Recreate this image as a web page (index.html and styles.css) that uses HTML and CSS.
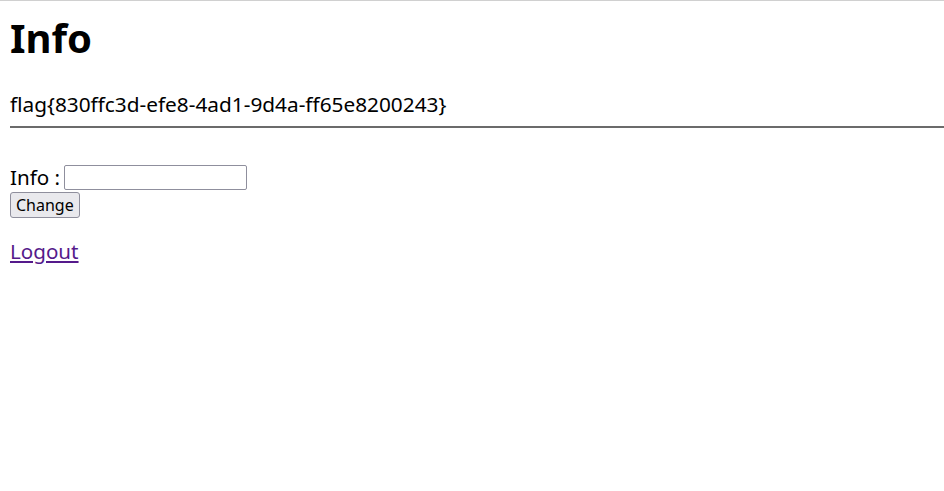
FILE: index.html
```html
<!DOCTYPE html>
<html>
<head>
<meta charset="utf-8">
<link rel="stylesheet" href="styles.css">
</head>
<body>
<div class="topline"></div>
<main class="page">
  <h1 class="title">Info</h1>
  <p class="flag">flag{830ffc3d-efe8-4ad1-9d4a-ff65e8200243}</p>
  <hr class="rule">
  <form class="form">
    <label class="label">Info : <input class="field" type="text"></label>
    <button class="btn" type="button">Change</button>
  </form>
  <a class="logout" href="#">Logout</a>
</main>
</body>
</html>
```
FILE: styles.css
```css
html, body { margin: 0; padding: 0; background: #fff; }
body { font-family: "Noto Sans", "Open Sans", sans-serif; color: #000; }
.topline { height: 1px; background: #d0d0d0; }
.page { padding: 0 0 0 10px; }
.title { font-size: 40px; font-weight: bold; margin: 12px 0 0; line-height: 50px; }
.flag { font-size: 20.8px; margin: 28px 0 0; line-height: 26px; }
.rule { margin: 9px 0 0; border: 0; border-top: 2px solid #6b6b6b; height: 0; }
.form { margin-top: 36px; display: flex; flex-direction: column; align-items: flex-start; }
.label { font-size: 20.6px; line-height: 26px; display: flex; align-items: center; gap: 4px; }
.field { width: 177px; height: 21px; border: 1px solid #8f8f9d; border-radius: 2px; padding: 1px 2px; margin: 0; }
.btn { font-family: "Noto Sans", sans-serif; font-size: 16px; height: 26px; padding: 0 5px; margin-top: 2px; border: 1px solid #8f8f9d; border-radius: 3px; background: #e9e9ed; color: #000; }
.logout { display: inline-block; margin-top: 20px; font-size: 20.6px; line-height: 26px; color: #551a8b; }
```
